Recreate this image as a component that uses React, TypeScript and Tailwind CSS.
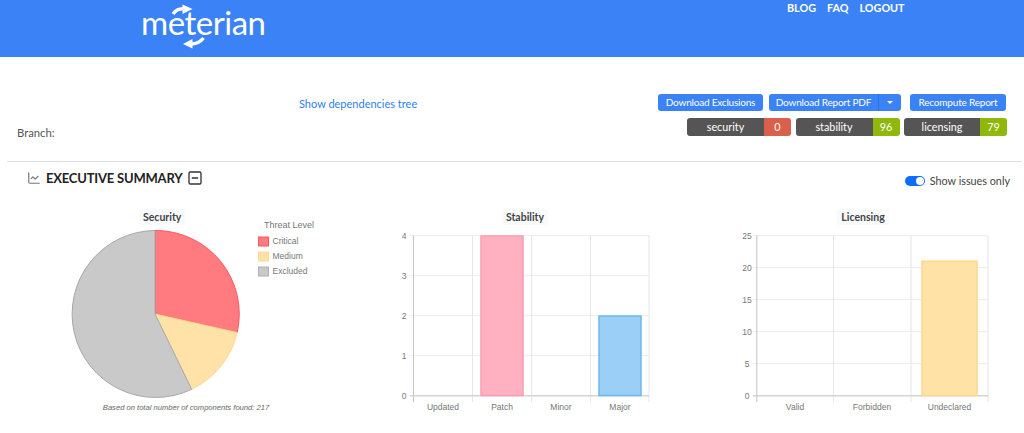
import { ChartLine, SquareMinus } from 'lucide-react';

const chartFont = '"Liberation Sans", Arial, sans-serif';

function Logo() {
  return (
    <svg viewBox="130 0 150 57" className="w-[150px] h-[57px]">
      <text x="141" y="35" fill="#fff" fontFamily="Lato, sans-serif" fontWeight="400" fontSize="33" textLength="125">
        meterian
      </text>
      <path d="M173 14C176 9.5 179 8.5 184 8.8" fill="none" stroke="#fff" strokeWidth="3.5" />
      <path d="M182.5 4.5L192.5 9L182.5 14Z" fill="#fff" />
      <path d="M203.5 38C200 42.5 197 44 191 44" fill="none" stroke="#fff" strokeWidth="3.5" />
      <path d="M192.5 39L183 44L192.5 48.5Z" fill="#fff" />
    </svg>
  );
}

function Score({ label, value, color, w }: { label: string; value: number; color: string; w: string }) {
  return (
    <div className={`flex h-[18px] rounded-[3px] overflow-hidden text-[10.8px] leading-[18px] text-white ${w}`}>
      <div className="flex-1 text-center bg-[#555555]">{label}</div>
      <div className={`w-[27px] text-center ${color}`}>{value}</div>
    </div>
  );
}

function ChartTitle({ children, className }: { children: string; className?: string }) {
  return (
    <div className={`h-4 px-1 rounded-[2px] bg-[#f8fafc] text-[10.5px] leading-4 font-bold text-[#444444] ${className ?? ''}`}>
      {children}
    </div>
  );
}

function SecurityChart() {
  const legend = [
    { y: 236, label: 'Critical', fill: '#ff7b7f', stroke: '#ff5560' },
    { y: 251, label: 'Medium', fill: '#ffe2a8', stroke: '#ffd98e' },
    { y: 266, label: 'Excluded', fill: '#c9c9c9', stroke: '#b0b0b0' },
  ];
  return (
    <svg viewBox="60 228 280 188" className="w-[280px] h-[188px] mt-[3px]" fontFamily={chartFont}>
      <path d="M155 314L155 230.5A83.5 83.5 0 0 1 237.2 332.5Z" fill="#ff7b7f" stroke="#ff5560" />
      <path d="M155 314L237.2 332.5A83.5 83.5 0 0 1 191.7 389.3Z" fill="#ffe2a8" stroke="#ffd98e" />
      <path d="M155 314L191.7 389.3A83.5 83.5 0 1 1 155 230.5Z" fill="#c9c9c9" stroke="#a8a8a8" />
      {legend.map(l => (
        <g key={l.label}>
          <rect x="258.5" y={l.y + 1} width="10" height="9" fill={l.fill} stroke={l.stroke} />
          <text x="272.5" y={l.y + 8} fontSize="8.5" fill="#777">
            {l.label}
          </text>
        </g>
      ))}
      <text x="186" y="410" textAnchor="middle" fontSize="7.6" fontStyle="italic" fill="#666">
        Based on total number of components found: 217
      </text>
    </svg>
  );
}

function StabilityChart() {
  const gridY = [235.7, 275.7, 315.7, 355.7];
  const gridX = [472.5, 531.5, 590.5, 649];
  const yLabels = ['4', '3', '2', '1', '0'];
  const xLabels = [
    { x: 443, t: 'Updated' },
    { x: 502, t: 'Patch' },
    { x: 561, t: 'Minor' },
    { x: 620, t: 'Major' },
  ];
  return (
    <svg viewBox="390 230 270 186" className="w-[270px] h-[186px] mt-[5px]" fontFamily={chartFont}>
      {gridY.map(y => (
        <line key={y} x1="410" x2="649" y1={y} y2={y} stroke="#ececec" />
      ))}
      {gridX.map(x => (
        <line key={x} x1={x} x2={x} y1="235.7" y2="402" stroke="#e6e6e6" />
      ))}
      <line x1="413.5" x2="413.5" y1="235.7" y2="402" stroke="#c4c4c4" />
      <line x1="410" x2="649" y1="395.7" y2="395.7" stroke="#d4d4d4" strokeWidth="1.5" />
      <rect x="481" y="236" width="42" height="159.5" fill="#ffb0c1" stroke="#ff9db2" strokeWidth="1.5" />
      <rect x="599" y="316" width="42" height="79.5" fill="#9ccff5" stroke="#6cb8f0" strokeWidth="1.5" />
      {yLabels.map((l, i) => (
        <text key={l} x="404" y={238.7 + i * 40} textAnchor="middle" fontSize="8.5" fill="#777">
          {l}
        </text>
      ))}
      {xLabels.map(l => (
        <text key={l.t} x={l.x} y="410" textAnchor="middle" fontSize="8.5" fill="#777">
          {l.t}
        </text>
      ))}
    </svg>
  );
}

function LicensingChart() {
  const gridY = [235.7, 267.7, 299.7, 331.7, 363.7];
  const gridX = [833.5, 911, 988];
  const yLabels = ['25', '20', '15', '10', '5', '0'];
  const xLabels = [
    { x: 795, t: 'Valid' },
    { x: 872, t: 'Forbidden' },
    { x: 949.5, t: 'Undeclared' },
  ];
  return (
    <svg viewBox="730 230 266 186" className="w-[266px] h-[186px] mt-[5px]" fontFamily={chartFont}>
      {gridY.map(y => (
        <line key={y} x1="753" x2="988" y1={y} y2={y} stroke="#ececec" />
      ))}
      {gridX.map(x => (
        <line key={x} x1={x} x2={x} y1="235.7" y2="402" stroke="#e6e6e6" />
      ))}
      <line x1="756.7" x2="756.7" y1="235.7" y2="402" stroke="#d4d4d4" strokeWidth="1.5" />
      <line x1="753" x2="988" y1="395.7" y2="395.7" stroke="#d4d4d4" strokeWidth="1.5" />
      <rect x="922" y="261.2" width="55" height="134.3" fill="#ffe3a6" stroke="#ffd88a" strokeWidth="1.5" />
      {yLabels.map((l, i) => (
        <text key={l} x="747" y={238.7 + i * 32} textAnchor="middle" fontSize="8.5" fill="#777">
          {l}
        </text>
      ))}
      {xLabels.map(l => (
        <text key={l.t} x={l.x} y="410" textAnchor="middle" fontSize="8.5" fill="#777">
          {l.t}
        </text>
      ))}
    </svg>
  );
}

export default function App() {
  return (
    <div className="w-[1024px] h-[433px] overflow-hidden bg-white font-['Lato',sans-serif] text-[#555555]">
      <header className="h-[57px] bg-[#3b82f6] pl-[130px] flex items-start">
        <Logo />
        <nav className="ml-[507px] flex gap-[11px] text-[10.8px] leading-[16px] font-bold text-white">
          <a>BLOG</a>
          <a>FAQ</a>
          <a>LOGOUT</a>
        </nav>
      </header>

      <section className="ml-[7px] mr-[2px] h-[105px] border-b border-[#dedede] flex">
        <div className="w-[651px] relative">
          <a className="absolute left-[292px] top-[39px] text-[11px] leading-4 text-[#2f80f0]">Show dependencies tree</a>
          <div className="absolute left-[10px] top-[68px] text-[11.3px] leading-4">Branch:</div>
        </div>
        <div className="flex-1 pt-[37px]">
          <div className="flex text-[10px] tracking-[-0.2px] leading-[17px] text-white">
            <button className="w-[105px] h-[17px] rounded-[3px] bg-[#3b82f6]">Download Exclusions</button>
            <div className="ml-[6px] w-[132px] h-[17px] flex rounded-[3px] overflow-hidden bg-[#3b82f6]">
              <span className="w-[110px] text-center border-r border-[#2f6fdc]">Download Report PDF</span>
              <span className="flex-1 flex items-center justify-center">
                <span className="border-x-[3.5px] border-x-transparent border-t-[3.5px] border-t-white" />
              </span>
            </div>
            <button className="ml-[9px] w-[96px] h-[17px] rounded-[3px] bg-[#3b82f6]">Recompute Report</button>
          </div>
          <div className="mt-[7px] ml-[29px] flex gap-[4.5px]">
            <Score label="security" value={0} color="bg-[#d9604a]" w="w-[104px]" />
            <Score label="stability" value={96} color="bg-[#8fb80a]" w="w-[104px]" />
            <Score label="licensing" value={79} color="bg-[#8fb80a]" w="w-[103px]" />
          </div>
        </div>
      </section>

      <section className="flex items-center h-7 mt-[2px] pl-[27px]">
        <ChartLine size={14} strokeWidth={2} className="text-[#777777]" />
        <h2 className="ml-[5px] text-[13px] tracking-[-0.2px] leading-5 font-bold text-[#222222]">EXECUTIVE SUMMARY</h2>
        <SquareMinus size={16} strokeWidth={2} className="ml-[5px] text-[#333333]" />
        <div className="ml-auto mr-[14px] mt-[6px] flex items-center">
          <span className="w-5 h-[10px] rounded-full bg-[#0d6efd] flex justify-end items-center pr-[1px]">
            <span className="w-2 h-2 rounded-full bg-white" />
          </span>
          <span className="ml-[5px] text-[10.8px] leading-4 text-[#444444]">Show issues only</span>
        </div>
      </section>

      <section className="flex pl-[60px] mt-[17px]">
        <div className="w-[280px] relative">
          <ChartTitle className="ml-[79px] w-fit">Security</ChartTitle>
          <div className="absolute left-[204px] top-[10px] text-[9px] leading-3 text-[#777777] font-['Liberation_Sans',sans-serif]">Threat Level</div>
          <SecurityChart />
        </div>
        <div className="ml-[50px] w-[270px] flex flex-col items-center">
          <ChartTitle>Stability</ChartTitle>
          <StabilityChart />
        </div>
        <div className="ml-[70px] w-[266px] flex flex-col items-center">
          <ChartTitle>Licensing</ChartTitle>
          <LicensingChart />
        </div>
      </section>
    </div>
  );
}
